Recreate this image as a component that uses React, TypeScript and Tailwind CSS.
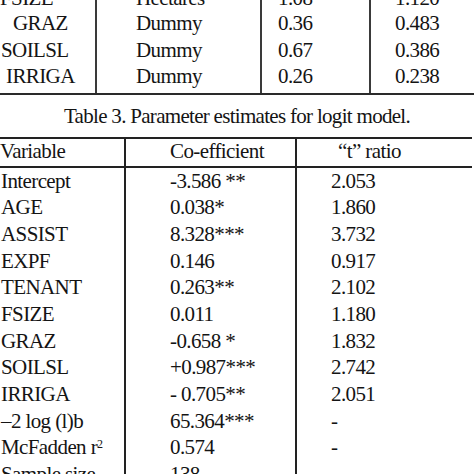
const font = { fontFamily: '"Liberation Serif", "Times New Roman", serif' };

const topRows = [
  { name: 'FSIZE', namePl: 'pl-[0px]', unit: 'Hectares', mean: '1.08', sd: '1.120', h: 'h-[23px] leading-[23px]' },
  { name: 'GRAZ', namePl: 'pl-[13px]', unit: 'Dummy', mean: '0.36', sd: '0.483', h: 'h-[27px] leading-[27px]' },
  { name: 'SOILSL', namePl: 'pl-[1px]', unit: 'Dummy', mean: '0.67', sd: '0.386', h: 'h-[26px] leading-[26px]' },
  { name: 'IRRIGA', namePl: 'pl-[6px]', unit: 'Dummy', mean: '0.26', sd: '0.238', h: 'h-[26px] leading-[26px]' },
];

const logitRows: [React.ReactNode, string, string][] = [
  ['Intercept', '-3.586 **', '2.053'],
  ['AGE', '0.038*', '1.860'],
  ['ASSIST', '8.328***', '3.732'],
  ['EXPF', '0.146', '0.917'],
  ['TENANT', '0.263**', '2.102'],
  ['FSIZE', '0.011', '1.180'],
  ['GRAZ', '-0.658 *', '1.832'],
  ['SOILSL', '+0.987***', '2.742'],
  ['IRRIGA', '- 0.705**', '2.051'],
  ['–2 log (l)b', '65.364***', '-'],
  [<>McFadden r<sup className="text-[12px]">2</sup></>, '0.574', '-'],
  ['Sample size', '138', ''],
];

export default function App() {
  return (
    <div className="w-[474px] h-[474px] overflow-hidden bg-white text-[#141414] text-[21px] tracking-[-0.6px]" style={font}>
      {/* Table 2 tail */}
      <div className="-mt-[13px] flex border-b-2 border-[#2a2a2a]">
        <div className="w-[97px] border-r-2 border-[#3a3a3a] pb-[4px]">
          {topRows.map((r) => (
            <div key={r.name} className={`${r.h} ${r.namePl} whitespace-nowrap`}>{r.name}</div>
          ))}
        </div>
        <div className="w-[165px] border-r-2 border-[#3a3a3a] pb-[4px]">
          {topRows.map((r) => (
            <div key={r.name} className={`${r.h} pl-[39px]`}>{r.unit}</div>
          ))}
        </div>
        <div className="w-[109px] border-r-2 border-[#3a3a3a] pb-[4px]">
          {topRows.map((r) => (
            <div key={r.name} className={`${r.h} pl-[16px]`}>{r.mean}</div>
          ))}
        </div>
        <div className="flex-1 pb-[4px]">
          {topRows.map((r) => (
            <div key={r.name} className={`${r.h} pl-[24px]`}>{r.sd}</div>
          ))}
        </div>
      </div>

      {/* Caption */}
      <div className="h-[42px] leading-[42px] text-center text-[21px] tracking-[-0.7px]">
        Table 3. Parameter estimates for logit model.
      </div>

      {/* Table 3 */}
      <div className="w-[472px] border-t-2 border-[#222]">
        <div className="flex h-[29px] leading-[24px] border-b-2 border-[#222]">
          <div className="w-[126px] border-r-2 border-[#222]">Variable</div>
          <div className="w-[171px] border-r-2 border-[#222] pl-[44px]">Co-efficient</div>
          <div className="flex-1 pl-[41px]">“t” ratio</div>
        </div>
        <div className="flex">
          <div className="w-[126px] border-r-2 border-[#222] pt-[1.5px]">
            {logitRows.map((r, i) => (
              <div key={i} className="h-[26.7px] leading-[22px] pl-[1px] whitespace-nowrap">{r[0]}</div>
            ))}
          </div>
          <div className="w-[171px] border-r-2 border-[#222] pl-[44px] pt-[1.5px]">
            {logitRows.map((r, i) => (
              <div key={i} className="h-[26.7px] leading-[22px] whitespace-nowrap">{r[1]}</div>
            ))}
          </div>
          <div className="flex-1 pl-[34px] pt-[1.5px]">
            {logitRows.map((r, i) => (
              <div key={i} className="h-[26.7px] leading-[22px]">{r[2]}</div>
            ))}
          </div>
        </div>
      </div>
    </div>
  );
}
